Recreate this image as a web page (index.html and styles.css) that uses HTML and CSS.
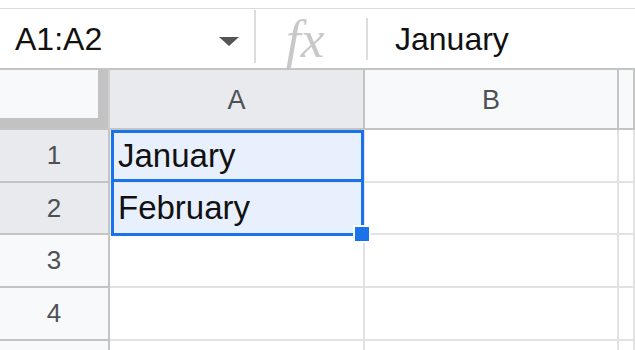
FILE: index.html
```html
<!DOCTYPE html>
<html>
<head>
<meta charset="utf-8">
<link rel="stylesheet" href="styles.css">
</head>
<body>
<div class="app">
  <div class="formula-bar">
    <div class="name-box">
      <span class="name-text">A1:A2</span>
      <span class="caret"></span>
    </div>
    <div class="sep sep-tall"></div>
    <div class="fx-box"><span class="fx">fx</span></div>
    <div class="sep sep-short"></div>
    <div class="formula-text">January</div>
  </div>
  <div class="sheet">
    <div class="corner"><div class="corner-inner"></div></div>
    <div class="col-head sel">A</div>
    <div class="col-head">B</div>
    <div class="col-head"></div>

    <div class="row-head sel">1</div>
    <div class="cell in-range">January</div>
    <div class="cell"></div>
    <div class="cell"></div>

    <div class="row-head sel">2</div>
    <div class="cell in-range">February</div>
    <div class="cell"></div>
    <div class="cell"></div>

    <div class="row-head">3</div>
    <div class="cell"></div>
    <div class="cell"></div>
    <div class="cell"></div>

    <div class="row-head">4</div>
    <div class="cell"></div>
    <div class="cell"></div>
    <div class="cell"></div>

    <div class="row-head last"></div>
    <div class="cell last"></div>
    <div class="cell last"></div>
    <div class="cell last"></div>

    <div class="range-outline"></div>
    <div class="active-outline"></div>
    <div class="fill-handle"></div>
  </div>
</div>
</body>
</html>
```

FILE: styles.css
```css
html, body {
  margin: 0;
  padding: 0;
  background: #ffffff;
}

body {
  width: 635px;
  height: 350px;
  overflow: hidden;
  font-family: "Liberation Sans", Arial, sans-serif;
  color: #000000;
}

.app {
  padding-top: 8px;
}

.formula-bar {
  display: flex;
  align-items: center;
  height: 59px;
  border-top: 1px solid #dadce0;
  border-bottom: 2px solid #c4c4c4;
  background: #ffffff;
}

.name-box {
  display: flex;
  align-items: center;
  width: 254px;
  box-sizing: border-box;
  padding: 0 15px;
  height: 100%;
}

.name-text {
  font-size: 32px;
  color: #111111;
  padding-top: 2px;
}

.caret {
  margin-left: auto;
  width: 0;
  height: 0;
  border-left: 10px solid transparent;
  border-right: 10px solid transparent;
  border-top: 9px solid #555555;
  margin-top: 6px;
}

.sep {
  width: 2px;
  background: #dadce0;
  align-self: flex-start;
}

.sep-tall {
  height: 53px;
  margin-top: 1px;
}

.sep-short {
  height: 42px;
  margin-top: 9px;
}

.fx-box {
  width: 110px;
  height: 100%;
  display: flex;
  align-items: center;
  box-sizing: border-box;
  padding-left: 30px;
}

.fx {
  font-family: "Liberation Serif", "Times New Roman", serif;
  font-style: italic;
  font-size: 53px;
  color: #c8c8c8;
  line-height: 1;
  padding-top: 2px;
}

.formula-text {
  padding-left: 27px;
  font-size: 32px;
  color: #111111;
  padding-top: 2px;
}

.sheet {
  position: relative;
  display: grid;
  grid-template-columns: 110px 255px 254px 1fr;
  grid-template-rows: 60px 53px 52px 53px 53px 9px;
}

.corner {
  background: #c2c2c2;
  border-right: 2px solid #d0d0d0;
  border-bottom: 2px solid #c4c4c4;
  box-sizing: border-box;
}

.corner-inner {
  width: 98px;
  height: 48px;
  background: #f8f9fa;
}

.col-head {
  background: #f8f9fa;
  border-right: 2px solid #c4c4c4;
  border-bottom: 2px solid #c4c4c4;
  box-sizing: border-box;
  display: flex;
  align-items: center;
  justify-content: center;
  font-size: 27px;
  color: #4d5156;
  padding-top: 2px;
}

.col-head.sel {
  background: #e8eaed;
}

.row-head {
  background: #f8f9fa;
  border-right: 2px solid #c4c4c4;
  border-bottom: 2px solid #c4c4c4;
  box-sizing: border-box;
  display: flex;
  align-items: center;
  justify-content: center;
  font-size: 26px;
  color: #4d5156;
}

.row-head.sel {
  background: #e8eaed;
}

.cell {
  background: #ffffff;
  border-right: 2px solid #e2e2e2;
  border-bottom: 2px solid #e2e2e2;
  box-sizing: border-box;
  display: flex;
  align-items: center;
  padding-left: 8px;
  font-size: 33px;
  color: #111111;
}

.cell.in-range {
  background: #e8f0fe;
}

.row-head.last,
.cell.last {
  border-bottom: none;
}

.range-outline {
  position: absolute;
  left: 111px;
  top: 60px;
  width: 253px;
  height: 106px;
  box-sizing: border-box;
  border: 3px solid #1a73e8;
  pointer-events: none;
}

.active-outline {
  position: absolute;
  left: 111px;
  top: 60px;
  width: 253px;
  height: 52px;
  box-sizing: border-box;
  border: 3px solid #1a73e8;
  pointer-events: none;
}

.fill-handle {
  position: absolute;
  left: 353px;
  top: 155px;
  width: 14px;
  height: 14px;
  background: #1a73e8;
  border: 2px solid #ffffff;
}
```
